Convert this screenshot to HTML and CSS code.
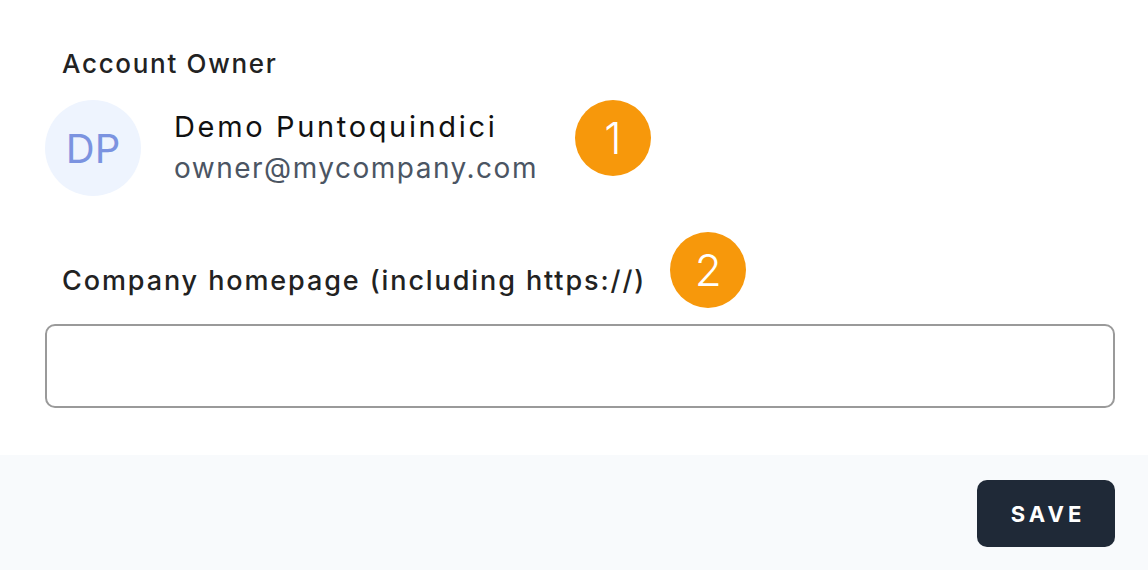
FILE: index.html
```html
<!DOCTYPE html>
<html>
<head>
<meta charset="utf-8">
<link rel="stylesheet" href="styles.css">
</head>
<body>
<div class="page">
  <div class="content">
    <div class="section-label">Account Owner</div>
    <div class="owner-row">
      <div class="avatar">DP</div>
      <div class="owner-info">
        <div class="owner-name">Demo Puntoquindici</div>
        <div class="owner-email">owner@mycompany.com</div>
      </div>
      <div class="badge badge-one">1</div>
    </div>
    <div class="field-label-row">
      <label class="field-label" for="homepage">Company homepage (including https://)</label>
      <div class="badge badge-two">2</div>
    </div>
    <input class="text-input" id="homepage" type="text">
  </div>
  <div class="footer">
    <button class="save-btn">SAVE</button>
  </div>
</div>
</body>
</html>
```
FILE: styles.css
```css
html, body {
  margin: 0;
  padding: 0;
  background: #ffffff;
}
body {
  font-family: "Inter", "Open Sans", sans-serif;
  color: #1f1f1f;
}
.page {
  width: 1148px;
  height: 570px;
  display: flex;
  flex-direction: column;
}
.content {
  padding: 44px 33px 0 45px;
  flex: 0 0 auto;
  height: 411px;
  box-sizing: border-box;
}
.section-label {
  font-size: 26px;
  font-weight: 500;
  color: #222;
  margin-left: 17px;
  line-height: 40px;
  letter-spacing: 1.7px;
}
.owner-row {
  display: flex;
  align-items: flex-start;
  margin-top: 16px;
}
.avatar {
  width: 96px;
  height: 96px;
  border-radius: 50%;
  background: #eef4fe;
  color: #7b93e0;
  font-size: 40px;
  display: flex;
  align-items: center;
  justify-content: center;
  flex: 0 0 auto;
}
.owner-info {
  margin-left: 33px;
  margin-top: 8px;
  display: flex;
  flex-direction: column;
}
.owner-name {
  font-size: 29px;
  color: #111;
  line-height: 38px;
  letter-spacing: 2.65px;
}
.owner-email {
  font-size: 28px;
  color: #4b5563;
  line-height: 38px;
  margin-top: 3px;
  letter-spacing: 1.5px;
}
.badge {
  width: 76px;
  height: 76px;
  border-radius: 50%;
  background: #f7980b;
  color: #ffffff;
  font-size: 44px;
  font-weight: 300;
  display: flex;
  align-items: center;
  justify-content: center;
  flex: 0 0 auto;
}
.badge-one {
  margin-left: 37px;
}
.field-label-row {
  display: flex;
  align-items: center;
  margin-top: 36px;
  margin-left: 17px;
}
.field-label {
  font-size: 27px;
  font-weight: 500;
  color: #222;
  margin-top: 20px;
  letter-spacing: 1.9px;
}
.badge-two {
  margin-left: 24px;
}
.text-input {
  display: block;
  margin-top: 16px;
  width: 100%;
  height: 84px;
  box-sizing: border-box;
  border: 2px solid #9a9a9a;
  border-radius: 10px;
  background: #fff;
  font-size: 24px;
  font-family: inherit;
  outline: none;
}
.footer {
  margin-top: 44px;
  flex: 1 1 auto;
  background: #f8fafc;
  display: flex;
  justify-content: flex-end;
  align-items: flex-start;
  padding: 25px 33px 0 0;
}
.save-btn {
  width: 138px;
  height: 67px;
  border: none;
  border-radius: 10px;
  background: #1f2937;
  color: #ffffff;
  font-family: inherit;
  font-size: 22px;
  font-weight: 700;
  letter-spacing: 4px;
  padding: 0 0 0 4px;
  cursor: pointer;
}
```
